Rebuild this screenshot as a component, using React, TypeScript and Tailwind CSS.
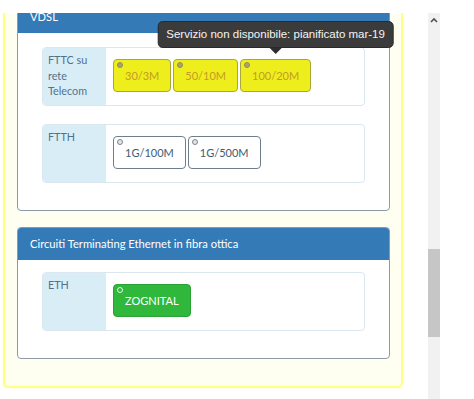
import React from 'react';

type Kind = 'yellow' | 'white' | 'green';

const btnStyles: Record<Kind, string> = {
  yellow: 'bg-[#efee1d] border-[#a8a73c] text-[#c49a26]',
  white: 'bg-white border-[#6e7e8c] text-[#3d5c72]',
  green: 'bg-[#2fb83b] border-[#2aa235] text-white',
};

const dotStyles: Record<Kind, string> = {
  yellow: 'bg-[#a8a46c] border-[#938f55]',
  white: 'bg-[#e4e4e4] border-[#7c8792]',
  green: 'bg-[#2fb83b] border-[#e8f8e8]',
};

function Chip({ label, kind, tip }: { label: string; kind: Kind; tip?: string }) {
  return (
    <div
      className={`relative h-[33px] rounded-[4px] border px-[11px] flex items-center text-[11px] ${btnStyles[kind]}`}
    >
      <span className={`absolute left-[3px] top-[2px] w-[6px] h-[6px] rounded-full border ${dotStyles[kind]}`} />
      <span className="mt-[1px]">{label}</span>
      {tip && (
        <div className="absolute bottom-full left-1/2 -translate-x-1/2 mb-[6px] flex flex-col items-center z-10">
          <div className="whitespace-nowrap rounded-[5px] border border-[#2a2a2a] bg-[#3b3b3b] px-[8px] h-[27px] flex items-center text-[11.5px] text-[#f4f4f4] font-['Liberation_Sans',Arial,sans-serif]">
            {tip}
          </div>
          <div className="w-0 h-0 border-l-[6px] border-r-[6px] border-t-[6px] border-l-transparent border-r-transparent border-t-[#2e2e2e]" />
        </div>
      )}
    </div>
  );
}

function Row({ label, children }: { label: React.ReactNode; children: React.ReactNode }) {
  return (
    <div className="flex rounded-[4px] border border-[#dbe7ee] bg-white">
      <div className="w-[63px] shrink-0 bg-[#d9edf7] px-[5px] pt-[4px] text-[10.8px] leading-[15.5px] text-[#52718a] rounded-l-[3px]">
        {label}
      </div>
      <div className="flex gap-[2px] pl-[7px] pt-[11px] pb-[13px]">{children}</div>
    </div>
  );
}

function Panel({ title, top, children }: { title: string; top: string; children: React.ReactNode }) {
  return (
    <div className="rounded-[4px] border border-[#8c9aa6] bg-white">
      <div className="h-[32px] bg-[#337ab7] rounded-t-[3px] px-[12px] flex items-center text-[11.2px] text-white">
        {title}
      </div>
      <div className={`px-[24px] pb-[27px] flex flex-col gap-[18px] ${top}`}>{children}</div>
    </div>
  );
}

export default function App() {
  return (
    <div className="w-[474px] h-[399px] bg-white pt-[13px] flex font-['Lato','Noto_Sans',sans-serif]">
      <div className="w-[428px] h-[386px] overflow-hidden">
        <div className="-mt-[27px] ml-[3px] w-[400px] border-2 border-[#ffff85] rounded-b-[5px] bg-[#fffff1] pt-[12px] pl-[12px] pr-[11px] pb-[27px] flex flex-col gap-[16px] shadow-[0_0_2px_#ffffb0]">
          <Panel title="VDSL" top="pt-[14px]">
            <Row
              label={
                <>
                  FTTC su
                  <br />
                  rete
                  <br />
                  Telecom
                </>
              }
            >
              <Chip label="30/3M" kind="yellow" />
              <Chip label="50/10M" kind="yellow" />
              <Chip label="100/20M" kind="yellow" tip="Servizio non disponibile: pianificato mar-19" />
            </Row>
            <Row label="FTTH">
              <Chip label="1G/100M" kind="white" />
              <Chip label="1G/500M" kind="white" />
            </Row>
          </Panel>
          <Panel title="Circuiti Terminating Ethernet in fibra ottica" top="pt-[12px]">
            <Row label="ETH">
              <Chip label="ZOGNITAL" kind="green" />
            </Row>
          </Panel>
        </div>
      </div>
      <div className="w-[12px] h-[386px] bg-[#f1f1f1] flex flex-col items-center">
        <svg width="8" height="6" viewBox="0 0 8 6" className="mt-[4px]">
          <path d="M1 5 L4 2 L7 5" fill="none" stroke="#505050" strokeWidth="1.6" />
        </svg>
        <div className="mt-[226px] w-[12px] h-[88px] bg-[#c6c6c6]" />
      </div>
    </div>
  );
}
